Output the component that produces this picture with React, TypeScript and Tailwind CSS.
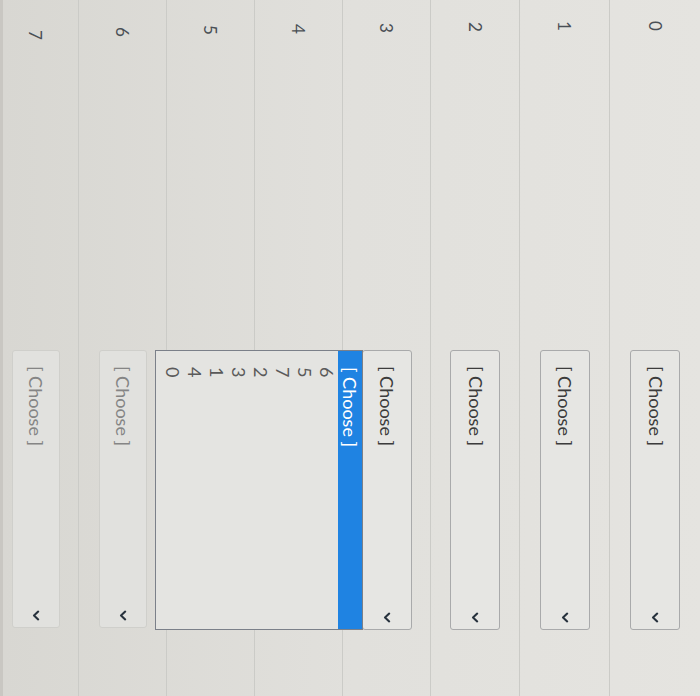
import React from 'react';

// Photo of the screen is turned a quarter clockwise, so the page runs in
// vertical-rl: rows stack right to left, text reads top to bottom.

const rows = [
  { label: '0', width: 'w-[91px]', pad: 'pt-[21px]', faded: false },
  { label: '1', width: 'w-[90px]', pad: 'pt-[21px]', faded: false },
  { label: '2', width: 'w-[89px]', pad: 'pt-[22px]', faded: false },
  { label: '3', width: 'w-[88px]', pad: 'pt-[23px]', faded: false, open: true },
  { label: '4', width: 'w-[88px]', pad: 'pt-[24px]', faded: false },
  { label: '5', width: 'w-[88px]', pad: 'pt-[25px]', faded: false },
  { label: '6', width: 'w-[88px]', pad: 'pt-[27px]', faded: true },
  { label: '7', width: 'w-[75px] pr-[10px]', pad: 'pt-[30px]', faded: true },
];

const options = ['6', '5', '7', '2', '3', '1', '4', '0'];

const Chevron = () => (
  <svg width="8" height="11" viewBox="0 0 8 11" className="shrink-0">
    <path d="M6.2 1.6 L2 5.5 L6.2 9.4" stroke="#27323d" strokeWidth="2.1" fill="none" strokeLinecap="round" strokeLinejoin="round" />
  </svg>
);

const Listbox = () => (
  <div className="absolute top-[-1px] right-full z-10 w-[208px] h-[280px] border border-[#7b8089] bg-[#e4e4e1] text-[#5a5a5a]">
    <div className="w-[24px] bg-[#1f83e2] text-white ps-[16px] flex items-center">[ Choose ]</div>
    {options.map((o) => (
      <div key={o} className="w-[22px] ps-[16px] flex items-center">
        {o}
      </div>
    ))}
  </div>
);

const Select = ({ faded, open }: { faded: boolean; open?: boolean }) => (
  <div
    className={
      faded
        ? 'relative flex items-center w-[48px] h-[278px] rounded-[3px] border border-[#cfcfcb] bg-[#e1e1de] ps-[15px] pe-[6px] text-[#858585]'
        : 'relative flex items-center w-[50px] h-[280px] rounded-[3px] border border-[#a9aaab] bg-[#e6e6e3] ps-[15px] pe-[6px] text-[#3c3c3c]'
    }
  >
    <span>[ Choose ]</span>
    <span className="ms-auto flex">
      <Chevron />
    </span>
    {open && <Listbox />}
  </div>
);

export default function App() {
  return (
    <div className="[writing-mode:vertical-rl] w-[700px] h-[696px] overflow-hidden border-l-[3px] border-[#c9c7c2] bg-linear-to-r from-[#d8d7d2] via-[#e1e0dc] to-[#e5e4e0] font-['Lato','Noto_Sans',sans-serif] text-[18px]">
      {rows.map((r, i) => (
        <div
          key={r.label}
          className={
            r.width +
            ' flex items-center ' +
            (i < 7 ? 'border-l border-[#cbcbc7]' : '')
          }
        >
          <div className={'h-[350px] flex items-start justify-start text-[#4a4f55] text-[17px] ' + r.pad}>
            <span>{r.label}</span>
          </div>
          <Select faded={r.faded} open={r.open} />
        </div>
      ))}
    </div>
  );
}
